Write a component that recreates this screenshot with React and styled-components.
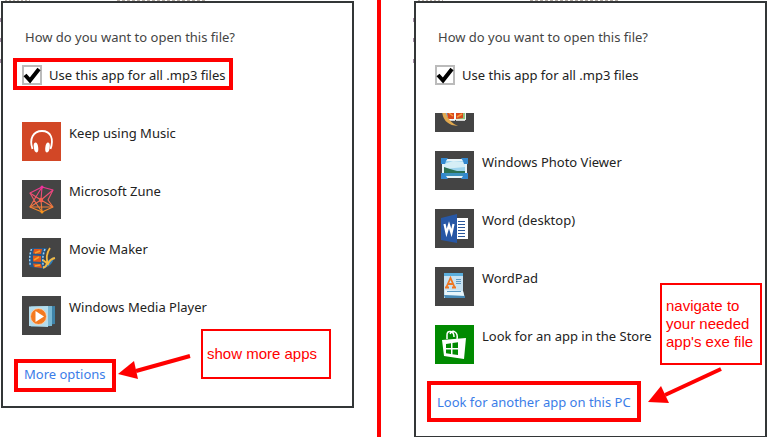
import React, { useState } from 'react';
import styled, { createGlobalStyle } from 'styled-components';

const MusicIcon = () => (
    <svg viewBox="0 0 39 39">
        <path d="M10.500 27C7 17 11 9 20 9S32 17 28.500 27" fill="none" stroke="#fff" strokeWidth="1.800" />
        <ellipse cx="14" cy="25.500" rx="2.200" ry="5" fill="#fff" transform="rotate(-8 14 25.500)" />
        <ellipse cx="25.500" cy="25.500" rx="2.200" ry="5" fill="#fff" transform="rotate(8 25.500 25.500)" />
    </svg>
);

const ZuneIcon = () => (
    <svg viewBox="0 0 39 39">
        <defs>
            <linearGradient id="zune" x1="0" y1="6" x2="0" y2="33" gradientUnits="userSpaceOnUse">
                <stop offset="0" stopColor="#ef2f9c" />
                <stop offset="0.5" stopColor="#f0605c" />
                <stop offset="1" stopColor="#f7941d" />
            </linearGradient>
        </defs>
        <g fill="none" stroke="url(#zune)" strokeWidth="1.100" strokeLinejoin="round">
            <path d="M8 13L20 7L31 10L26 20L31 27L20 32L8 27L19 20Z" />
            <path d="M20 7L19 20L31 10M20 7L12 20L8 27M8 13L12 20L20 32L19 20L31 27M8 27L31 27" />
        </g>
        <circle cx="20" cy="7" r="1.500" fill="#f02fa0" />
        <circle cx="19" cy="20" r="2.200" fill="#f4604f" />
        <circle cx="20" cy="32" r="1.500" fill="#f7941d" />
    </svg>
);

const MovieIcon = () => (
    <svg viewBox="0 0 39 39">
        <path d="M10 10Q5 19 8 29L23 31Q20 20 25 10Z" fill="#24598c" />
        <path d="M9.500 11Q6.500 19 8.500 28M23 11Q19 21 22 30" fill="none" stroke="#9fd0ef" strokeWidth="1.500" strokeDasharray="2 1.500" />
        <path d="M12 11H20L19 16L11 15.500ZM11 17.500L19 18V24L11 23.500ZM11 25.500L19 26L20 30L12 29Z" fill="#e4581b" />
        <path d="M13 15L18 13M12 22L17 19M13 28L18 27" stroke="#f7a02c" strokeWidth="1.500" />
        <path d="M23 30Q31 27 32 19L28 21L24 24Z" fill="#2e7dbc" />
        <path d="M28 10Q24 16 25 22T21 30M21 22L26 26Q28 21 33 20" fill="none" stroke="#f5b942" strokeWidth="1.800" />
    </svg>
);

const PlayerIcon = () => (
    <svg viewBox="0 0 39 39">
        <path d="M12 11L33 10V28L12 30Z" fill="#3f83a8" />
        <path d="M9 10.500L30 10V30L9 30.500Z" fill="#79b8d4" />
        <path d="M7 10.500L26 10V31L7 30Z" fill="#b4dcec" />
        <circle cx="16.500" cy="20.500" r="8" fill="#f47a20" stroke="#fbd9bd" strokeWidth="0.800" />
        <path d="M13.500 15L22 20.500L13.500 26Z" fill="#fff" />
    </svg>
);

const PicasaIcon = () => (
    <svg viewBox="0 0 39 39">
        <path d="M8 8H31V27H14Z" fill="#e8eef2" />
        <path d="M8 18L18 20V27L12 24Z" fill="#78b2e0" />
        <path d="M24 18H30V27H20Z" fill="#93c47d" />
        <path d="M12 19H19V26H13ZM21 20L28 19V25L21 26Z" fill="#d9481c" />
        <path d="M14 20L18 23M22 24L27 21" stroke="#f39a3a" strokeWidth="1.500" />
        <path d="M20 20V27M12 27H20M21 27H30" stroke="#fff" strokeWidth="1.500" />
        <path d="M7 14Q6 32 23 33Q13 29 10 18Z" fill="#e2a94f" />
    </svg>
);

const PhotoIcon = () => (
    <svg viewBox="0 0 39 39">
        <rect x="7" y="8" width="25" height="19" fill="#e9f4f8" />
        <rect x="9" y="10" width="21" height="15" fill="#9ed4ee" />
        <path d="M9 13L18 10L30 11V16L9 18Z" fill="#d6eef6" />
        <path d="M9 16L15 18L22 20H30V22H9Z" fill="#2d7153" />
        <path d="M9 22H30V25H9Z" fill="#3c91bd" />
        <path d="M6 7H13L11 10L10 13H6ZM33 7H26L28 10L29 13H33ZM6 28V22H10L11 25L13 28ZM33 28V22H29L28 25L26 28Z" fill="#3388cf" />
    </svg>
);

const WordIcon = () => (
    <svg viewBox="0 0 39 39">
        <rect x="20" y="9" width="13" height="21" fill="#fff" />
        <path d="M23 12.500H30M23 15.500H30M23 18.500H30M23 21.500H30M23 24.500H30M23 27.500H30" stroke="#2b579a" strokeWidth="1" />
        <path d="M6 9L22 5V34L6 31Z" fill="#2757a5" />
        <path d="M9.500 15L11.500 24L14 16L16.500 24L18.500 15" fill="none" stroke="#fff" strokeWidth="2.200" />
    </svg>
);

const WordPadIcon = () => (
    <svg viewBox="0 0 39 39">
        <path d="M9 7H28V24L30 31H9Z" fill="#c8e2f2" />
        <path d="M9 6H28V9H9Z" fill="#5aaedd" />
        <path d="M10 23L28 24L29 29L10 28Z" fill="#e8f5fb" />
        <path d="M9 28L30 29V31H10Z" fill="#4789b5" />
        <path d="M11.500 20L15.500 11L19.500 20M13 17H18M10 20.500H14M17 20.500H21" fill="none" stroke="#ef7622" strokeWidth="1.800" />
        <path d="M21 12.500H26M21 14.500H26M21 16.500H26M12 24.500H26" stroke="#5c9ac4" strokeWidth="1" />
    </svg>
);

const StoreIcon = () => (
    <svg viewBox="0 0 39 39">
        <path d="M12 14V10Q12 6 15.500 6.500Q19 7 19 12M15 9Q17 5 20 7Q23 9 22 14" fill="none" stroke="#fff" strokeWidth="1.500" />
        <path d="M7 15L31 13L29 34L9 31Z" fill="#fff" />
        <path d="M11 19L16 18.300V23H11ZM17.500 18L23 17.300V23H17.500ZM11 24.500H16V29L11 28.300ZM17.500 24.500H23V30L17.500 29.200Z" fill="#008a00" />
    </svg>
);

const firstApps = [
    { name: 'Keep using Music', icon: <MusicIcon />, color: '#d24726' },
    { name: 'Microsoft Zune', icon: <ZuneIcon /> },
    { name: 'Movie Maker', icon: <MovieIcon /> },
    { name: 'Windows Media Player', icon: <PlayerIcon /> },
];

const moreApps = [
    { name: '', icon: <PicasaIcon />, cut: true },
    { name: 'Windows Photo Viewer', icon: <PhotoIcon /> },
    { name: 'Word (desktop)', icon: <WordIcon /> },
    { name: 'WordPad', icon: <WordPadIcon /> },
    { name: 'Look for an app in the Store', icon: <StoreIcon />, color: '#008a00' },
];

const Dialog = ({ id, apps, marked, scrolled, link, children }) => {
    const [checked, setChecked] = useState(true);

    return (
        <Backdrop>
            <Panel>
                <Title>How do you want to open this file?</Title>
                <CheckRow $marked={marked} htmlFor={id}>
                    <CheckBox
                        id={id}
                        type="checkbox"
                        checked={checked}
                        onChange={() => setChecked(!checked)}
                    />
                    <Tick viewBox="0 0 20 20" $on={checked}>
                        <path d="M3 10L8 15.500L17 4" />
                    </Tick>
                    Use this app for all .mp3 files
                </CheckRow>
                <AppList $scrolled={scrolled}>
                    {apps.map((app, i) => (
                        <li key={i}>
                            <AppButton type="button" $cut={app.cut} aria-label={app.name || 'Picture manager'}>
                                <Tile $color={app.color}>{app.icon}</Tile>
                                {app.name}
                            </AppButton>
                        </li>
                    ))}
                </AppList>
                <LinkBox $tall={scrolled}>
                    <a href="#more">{link}</a>
                </LinkBox>
                {children}
            </Panel>
        </Backdrop>
    );
};

const App = () => (
    <>
        <GlobalStyle />
        <Page>
            <Dialog id="all-left" apps={firstApps} marked link="More options">
                <MoreNote>show more apps</MoreNote>
                <MoreArrow viewBox="0 0 74 28">
                    <path d="M72 4L18 19" />
                    <polygon points="0,22 16,9 20,27" />
                </MoreArrow>
            </Dialog>
            <Divider />
            <Dialog id="all-right" apps={moreApps} scrolled link="Look for another app on this PC">
                <BrowseNote>navigate to your needed app's exe file</BrowseNote>
                <BrowseArrow viewBox="0 0 74 38">
                    <path d="M73 2L17 28" />
                    <polygon points="0,35 13,19 21,36" />
                </BrowseArrow>
            </Dialog>
        </Page>
    </>
);

const GlobalStyle = createGlobalStyle`
  * {
    box-sizing: border-box;
  }
  body {
    margin: 0;
    background: #fff;
    color: #222;
    font-family: "Noto Sans", "Open Sans", sans-serif;
    font-size: 13px;
    line-height: 22px;
  }
`;
const Page = styled.main`
  display: flex;
  min-height: 100vh;
  padding-right: 1px;
`;
/* slivers of the window behind show along the top and left edges */
const Backdrop = styled.div`
  flex: 1;
  padding: 1px 0 0 1px;
  background:
    linear-gradient(#a58fa6, #a58fa6) 0 18px / 1px 4px no-repeat,
    linear-gradient(#a58fa6, #a58fa6) 0 38px / 1px 4px no-repeat,
    linear-gradient(#a58fa6, #a58fa6) 0 59px / 1px 4px no-repeat,
    repeating-linear-gradient(90deg, #b5aca4 0 2px, #fff 2px 4px) 5px 0 / 25px 1px no-repeat,
    repeating-linear-gradient(90deg, #b5aca4 0 3px, #fff 3px 5px) 117px 0 / 88px 1px no-repeat;
`;
const Panel = styled.section`
  position: relative;
  border: 2px solid #333637;
  background: #fff;
  padding: 23px 10px 14px;
`;
const Divider = styled.div`
  width: 4px;
  margin: 0 32px 0 23px;
  background: #f00;
`;
const Title = styled.h1`
  margin: 0 0 10px 12px;
  font-size: 13px;
  font-weight: 400;
  color: #444;
`;
const CheckRow = styled.label`
  display: flex;
  align-items: center;
  width: fit-content;
  height: 32px;
  padding: 2px 4px 0 5px;
  border: 4px solid ${({ $marked }) => ($marked ? '#f00' : 'transparent')};
`;
const CheckBox = styled.input`
  appearance: none;
  width: 20px;
  height: 20px;
  margin: 0 7px 0 0;
  border: 2px solid #bbb;
  background: #fff;
`;
const Tick = styled.svg`
  width: 20px;
  height: 20px;
  margin: 0 7px 0 -27px;
  visibility: ${({ $on }) => ($on ? 'visible' : 'hidden')};
  & path {
    fill: none;
    stroke: #000;
    stroke-width: 4;
  }
`;
const AppList = styled.ul`
  display: grid;
  gap: 19px;
  margin: ${({ $scrolled }) => ($scrolled ? '23px 0 17px 9px' : '32px 0 24px 9px')};
  padding: 0;
  list-style: none;
`;
const AppButton = styled.button`
  display: flex;
  align-items: ${({ $cut }) => ($cut ? 'flex-end' : 'flex-start')};
  gap: 8px;
  width: 100%;
  height: ${({ $cut }) => ($cut ? 19 : 39)}px;
  padding: 0;
  overflow: hidden;
  border: none;
  background: none;
  color: inherit;
  font: inherit;
  text-align: left;
  cursor: pointer;
`;
const Tile = styled.span`
  flex: none;
  width: 39px;
  height: 39px;
  background: ${({ $color }) => $color || '#444'};
  & svg {
    display: block;
  }
`;
const LinkBox = styled.div`
  display: flex;
  align-items: center;
  width: fit-content;
  height: ${({ $tall }) => ($tall ? 41 : 33)}px;
  margin-left: 1px;
  padding: ${({ $tall }) => ($tall ? '0 6px' : '0 6px 4px')};
  border: 4px solid #f00;
  & a {
    color: #3b7de8;
    text-decoration: none;
  }
`;
const Note = styled.p`
  position: absolute;
  display: flex;
  align-items: center;
  margin: 0;
  padding: 0 4px;
  border: 2px solid #f00;
  background: #fff;
  color: #f00;
  font-family: "Liberation Sans", Arial, sans-serif;
  font-size: 15px;
  line-height: 18px;
`;
const MoreNote = styled(Note)`
  right: 21px;
  bottom: 27px;
  width: 130px;
  height: 50px;
`;
const BrowseNote = styled(Note)`
  right: 3px;
  bottom: 71px;
  width: 102px;
  height: 82px;
`;
const Arrow = styled.svg`
  position: absolute;
  width: 74px;
  & path {
    stroke: #f00;
    stroke-width: 4;
  }
  & polygon {
    fill: #f00;
  }
`;
const MoreArrow = styled(Arrow)`
  left: 115px;
  bottom: 26px;
  height: 28px;
`;
const BrowseArrow = styled(Arrow)`
  right: 43px;
  bottom: 31px;
  height: 38px;
`;

export default App;
